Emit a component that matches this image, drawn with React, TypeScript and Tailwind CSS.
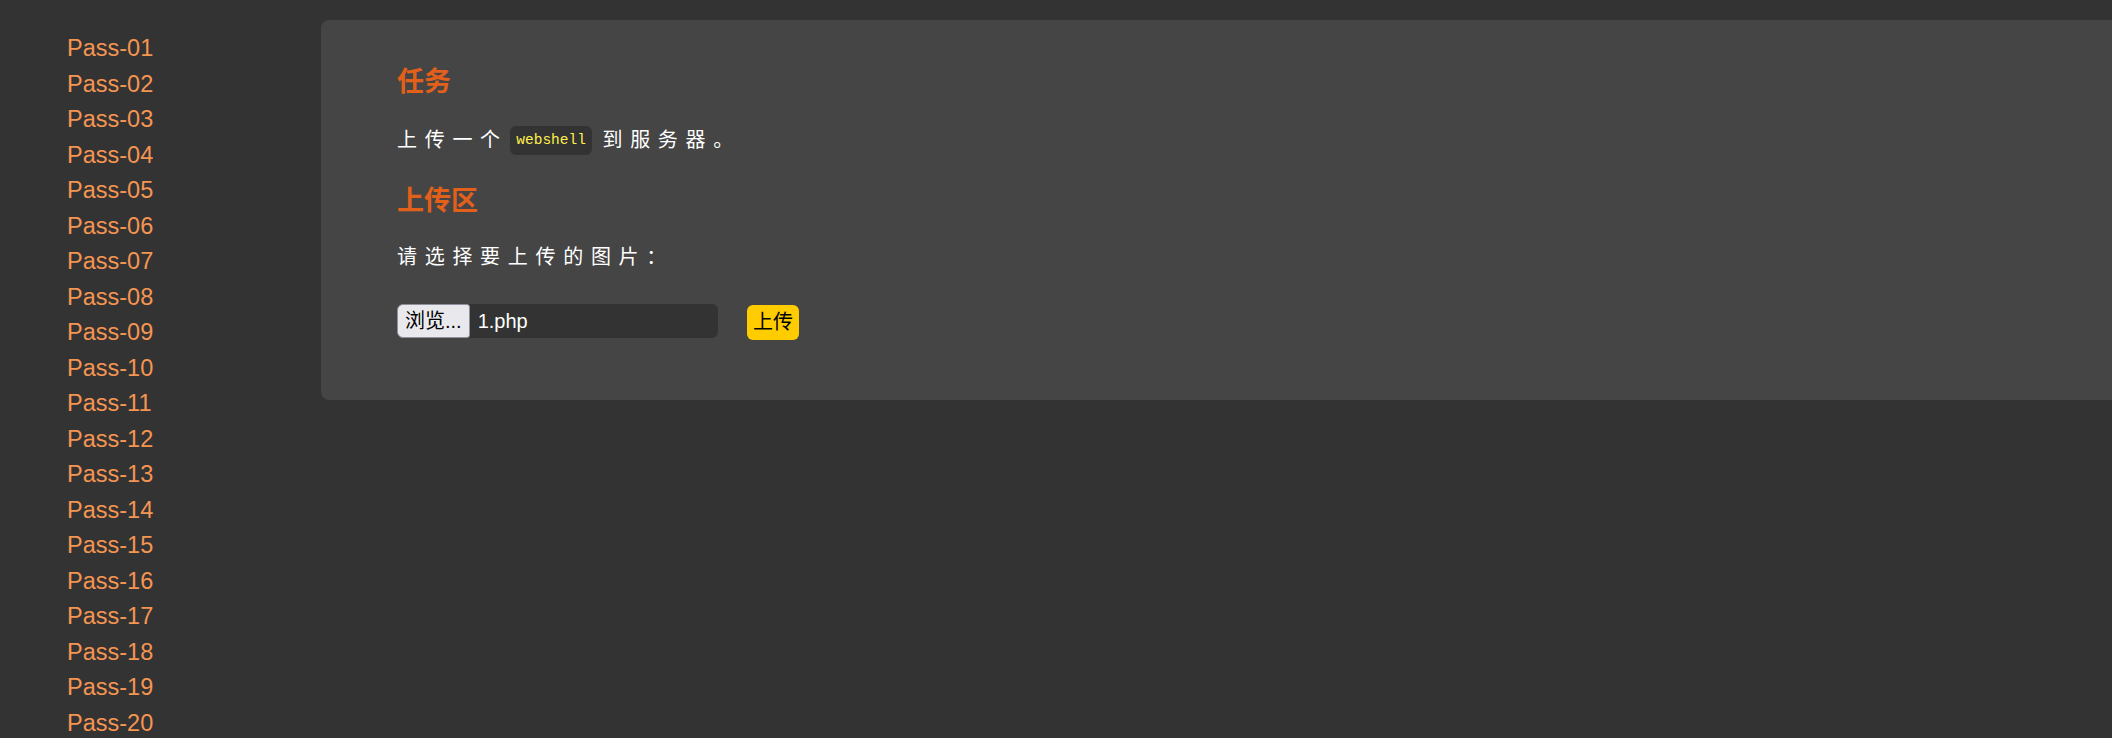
import React from "react";

const passes = Array.from({ length: 20 }, (_, i) => `Pass-${String(i + 1).padStart(2, "0")}`);

const cjk = "font-['Liberation_Sans','Noto_Sans_CJK_SC',sans-serif]";

export default function App() {
  return (
    <div className={`flex min-h-[738px] w-full overflow-hidden bg-[#333333] ${cjk}`}>
      {/* sidebar */}
      <ul className="w-[321px] shrink-0 pl-[67px] pt-[31px]">
        {passes.map((p) => (
          <li key={p} className="text-[23.5px] leading-[35.5px] text-[#f59552]">
            <a href="#">{p}</a>
          </li>
        ))}
      </ul>

      {/* main card */}
      <div className="flex-1 self-start">
        <div className="mt-[20px] rounded-l-lg bg-[#454545] pb-[60px] pl-[76px] pt-[46px]">
          <h2 className="text-[27px] font-bold leading-[32px] text-[#e2601a]">任务</h2>
          <p className="mt-[28px] flex items-center text-[20px] leading-[29px] tracking-[7.7px] text-white">
            <span>上传一个</span>
            <code className="ml-[2px] mr-[10px] rounded-[6px] bg-[#333333] px-[6.5px] font-['Liberation_Mono',monospace] text-[14.5px] font-normal leading-[29px] tracking-normal text-[#fff04d]">
              webshell
            </code>
            <span>到服务器。</span>
          </p>

          <h2 className="mt-[30px] text-[27px] font-bold leading-[32px] text-[#e2601a]">上传区</h2>
          <p className="mt-[26px] text-[20px] leading-[29px] tracking-[7.7px] text-white">请选择要上传的图片：</p>

          <form className="mt-[32px] flex items-start" onSubmit={(e) => e.preventDefault()}>
            <div className="flex h-[34px] w-[321px] items-center rounded-[6px] bg-[#333333]">
              <span className="flex h-full items-center rounded-l-[6px] rounded-r-[3px] border border-[#8f8f9d] bg-[#e9e9ed] px-[7px] text-[20px] text-black">
                浏览...
              </span>
              <span className="pl-[8px] text-[20px] text-white">1.php</span>
            </div>
            <button
              type="submit"
              className="ml-[29px] mt-px h-[35px] rounded-[6px] bg-[#ffcc00] px-[6px] text-[20px] leading-[35px] text-black"
            >
              上传
            </button>
          </form>
        </div>
      </div>
    </div>
  );
}
